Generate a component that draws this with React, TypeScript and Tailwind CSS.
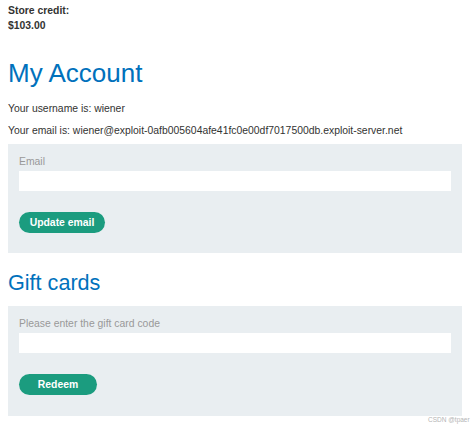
import React from "react";

export default function App() {
  const font = { fontFamily: '"Liberation Sans", Arial, sans-serif' };
  return (
    <div className="relative w-[474px] h-[428px] bg-white text-[#333332] overflow-hidden" style={font}>
      <div className="px-2 pt-[4px]">
        <div className="text-[10.4px] leading-[14.5px] font-bold">
          <div>Store credit:</div>
          <div>$103.00</div>
        </div>
        <h1 className="mt-[25px] text-[26px] leading-[30px] text-[#0071bc]">My Account</h1>
        <p className="mt-[14px] text-[10.4px] leading-[14.5px]">Your username is: wiener</p>
        <p className="mt-[7px] text-[10.4px] leading-[14.5px]">
          Your email is: wiener@exploit-0afb005604afe41fc0e00df7017500db.exploit-server.net
        </p>
        <form className="mt-[6px] w-[454px] bg-[#e9eef1] px-[11px] pt-[11px] pb-[20px]">
          <label className="block text-[10.4px] leading-[14.5px] text-[#999]">Email</label>
          <input className="block mt-[1.5px] w-full h-[20px] bg-white outline-none" />
          <button
            type="button"
            className="mt-[21px] h-[21px] w-[86px] rounded-full bg-[#1b9c7f] text-white text-[10.4px] font-bold"
          >
            Update email
          </button>
        </form>
        <h2 className="mt-[17px] text-[21.6px] leading-[26px] text-[#0071bc]">Gift cards</h2>
        <form className="mt-[10px] w-[454px] bg-[#e9eef1] px-[11px] pt-[11px] pb-[21px]">
          <label className="block text-[10.4px] leading-[14.5px] text-[#999]">Please enter the gift card code</label>
          <input className="block mt-[1.5px] w-full h-[20px] bg-white outline-none" />
          <button
            type="button"
            className="mt-[21px] h-[21px] w-[78px] rounded-full bg-[#1b9c7f] text-white text-[10.4px] font-bold"
          >
            Redeem
          </button>
        </form>
      </div>
      <div className="absolute left-[428px] top-[416px] text-[6.5px] leading-[8px] text-[#b5b5b5]">CSDN @tpaer</div>
    </div>
  );
}
